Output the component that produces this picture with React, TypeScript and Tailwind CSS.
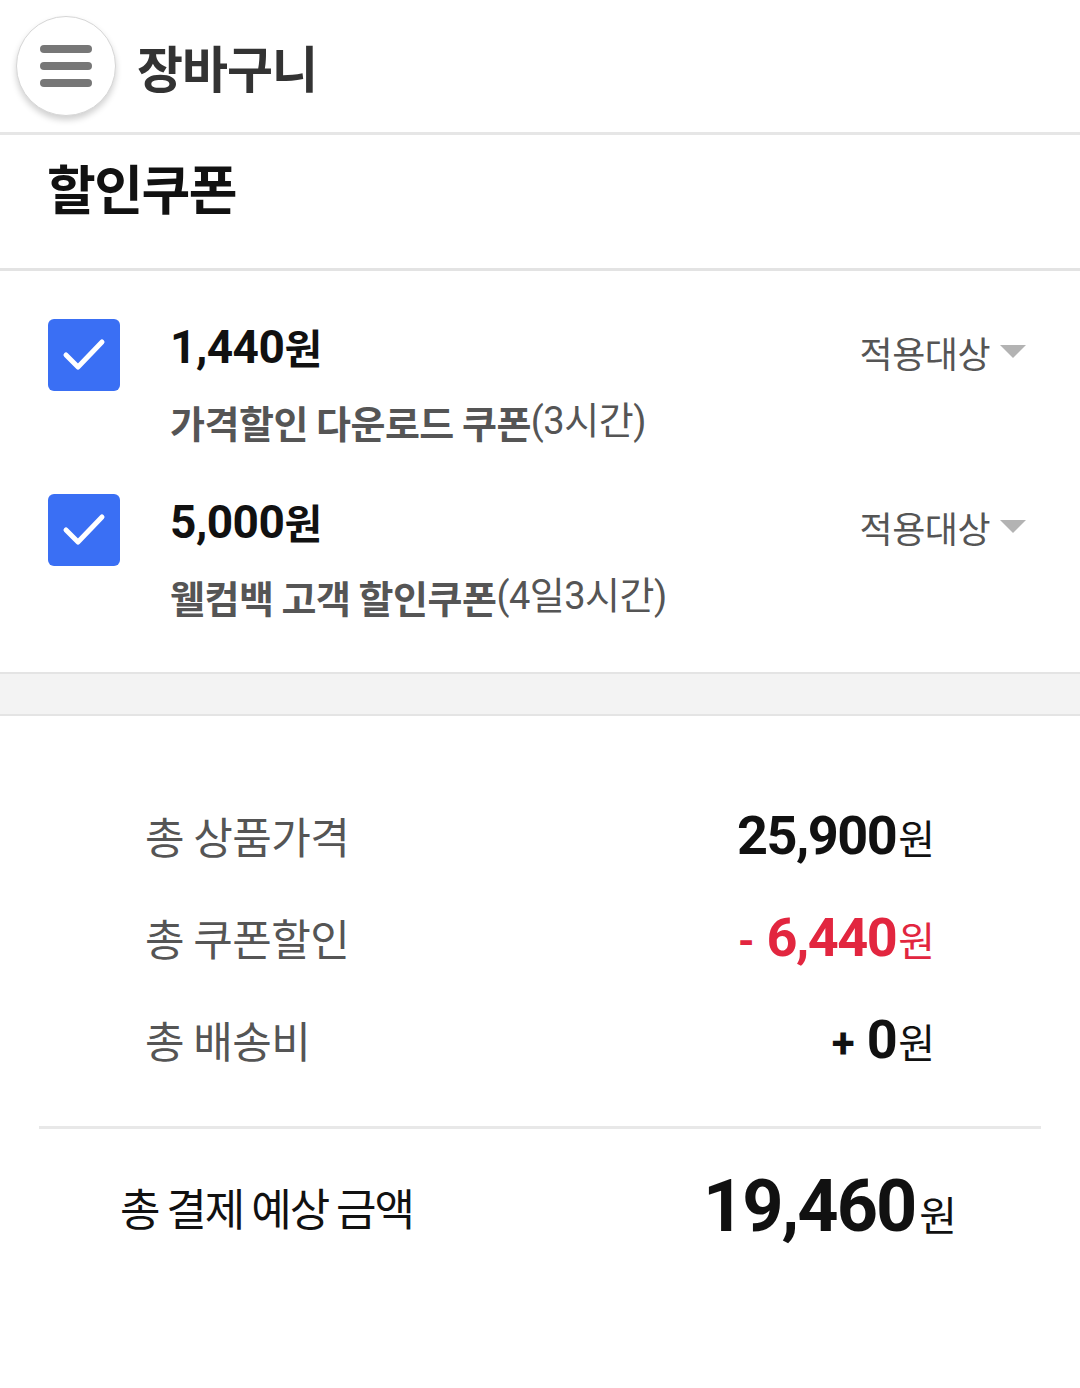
import React from 'react';

const KR = "font-['Noto_Sans_CJK_KR','Noto_Sans',sans-serif]";
const NUM = "font-['Roboto','Noto_Sans_CJK_KR',sans-serif]";

type Coupon = { amount: string; name: string; period: string };

const coupons: Coupon[] = [
  { amount: '1,440', name: '가격할인 다운로드 쿠폰', period: '(3시간)' },
  { amount: '5,000', name: '웰컴백 고객 할인쿠폰', period: '(4일3시간)' },
];

function CheckBox() {
  return (
    <div className="flex h-[72px] w-[72px] shrink-0 items-center justify-center rounded-[6px] bg-[#3a6ff4]">
      <svg width="44" height="34" viewBox="0 0 44 34" fill="none">
        <path d="M4 17 L16 29 L40 4" stroke="#fff" strokeWidth="5" strokeLinecap="round" strokeLinejoin="round" />
      </svg>
    </div>
  );
}

function CouponRow({ c }: { c: Coupon }) {
  return (
    <div className="flex items-start pl-[48px] pr-[54px]">
      <CheckBox />
      <div className="ml-[50px] flex flex-1 flex-col">
        <div className={`${NUM} flex h-[56px] items-center text-[46px] font-bold tracking-[-0.5px] text-[#111]`}>
          {c.amount}
          <span className={`${KR} text-[41px] font-bold`}>원</span>
        </div>
        <div className={`${KR} mt-[18px] flex h-[56px] items-center text-[38px] text-[#555]`}>
          <span className="font-bold tracking-[-0.5px]">{c.name}</span>
          <span className={`${NUM} font-normal tracking-[-0.5px]`}>{c.period}</span>
        </div>
      </div>
      <div className={`${KR} mt-[9px] flex h-[48px] items-center gap-[10px] text-[36px] text-[#555]`}>
        <span className="tracking-[-0.5px]">적용대상</span>
        <svg width="26" height="14" viewBox="0 0 26 14">
          <path d="M0 0 H26 L13 13 Z" fill="#b3b3b3" />
        </svg>
      </div>
    </div>
  );
}

function SummaryRow({ label, sign, value, red }: { label: string; sign?: string; value: string; red?: boolean }) {
  const color = red ? 'text-[#e2263f]' : 'text-[#111]';
  return (
    <div className="flex h-[102px] items-center justify-between pl-[145px] pr-[145px]">
      <span className={`${KR} text-[43px] tracking-[-0.5px] text-[#555]`}>{label}</span>
      <span className={`flex items-baseline ${color}`}>
        {sign && <span className={`${NUM} mr-[12px] text-[42px] font-bold`}>{sign}</span>}
        <span className={`${NUM} text-[54px] font-bold tracking-[-1.5px]`}>{value}</span>
        <span className={`${KR} ml-[2px] text-[40px]`}>원</span>
      </span>
    </div>
  );
}

export default function App() {
  return (
    <div className="min-h-[1388px] w-[1080px] bg-white">
      <header className="flex h-[135px] items-center border-b-[3px] border-[#e6e6e6]">
        <button className="ml-[16px] flex h-[100px] w-[100px] items-center justify-center rounded-full border border-[#d6d6d6] bg-white shadow-[0_4px_6px_rgba(0,0,0,0.18)]">
          <svg width="54" height="44" viewBox="0 0 54 44">
            <rect x="1" y="1" width="52" height="8" rx="4" fill="#777" />
            <rect x="1" y="18" width="52" height="8" rx="4" fill="#777" />
            <rect x="1" y="35" width="52" height="8" rx="4" fill="#777" />
          </svg>
        </button>
        <h1 className={`${KR} ml-[21px] text-[50px] font-bold tracking-[-1px] text-[#333]`}>장바구니</h1>
      </header>

      <section className="flex h-[136px] items-center border-b-[3px] border-[#e3e3e3] pb-[28px] pl-[47px]">
        <h2 className={`${KR} text-[53px] font-bold tracking-[-1.5px] text-[#111]`}>할인쿠폰</h2>
      </section>

      <section className="flex flex-col gap-[45px] pb-[48px] pt-[48px]">
        {coupons.map((c) => (
          <CouponRow key={c.amount} c={c} />
        ))}
      </section>

      <div className="h-[44px] border-y-2 border-[#e4e4e4] bg-[#f3f3f3]" />

      <section className="pt-[68px]">
        <SummaryRow label="총 상품가격" value="25,900" />
        <SummaryRow label="총 쿠폰할인" sign="-" value="6,440" red />
        <SummaryRow label="총 배송비" sign="+" value="0" />
        <div className="mx-[39px] mt-[36px] h-[3px] bg-[#e8e8e8]" />
        <div className="flex h-[156px] items-center justify-between pl-[120px] pr-[123px]">
          <span className={`${KR} text-[44px] tracking-[-2px] text-[#111]`}>총 결제 예상 금액</span>
          <span className="flex items-baseline text-[#111]">
            <span className={`${NUM} text-[72px] font-bold tracking-[-2px]`}>19,460</span>
            <span className={`${KR} ml-[4px] text-[41px]`}>원</span>
          </span>
        </div>
      </section>
    </div>
  );
}
